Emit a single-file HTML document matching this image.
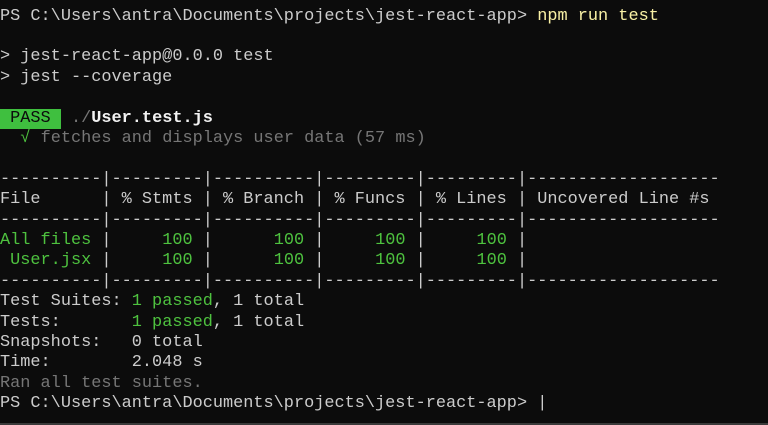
<!DOCTYPE html>
<html><head><meta charset="utf-8"><style>
html,body{margin:0;padding:0;background:#0c0c0c;width:768px;height:425px;overflow:hidden}
pre{margin:0;position:absolute;left:0;top:6.5px;font-family:"Liberation Mono",monospace;font-size:16.9px;line-height:20.4px;color:#cccccc;white-space:pre}
.g{color:#4ec23f}.y{color:#f9f1a5}.d{color:#767676}.b{color:#f2f2f2;font-weight:bold}
.p{background:#3fbf3f;color:#0c0c0c;display:inline-block;line-height:20px}
.edge{position:absolute;left:0;right:0;bottom:0;height:2px;background:#3a3a3a}
</style></head><body>
<pre>PS C:\Users\antra\Documents\projects\jest-react-app&gt; <span class="y">npm run test</span>

&gt; jest-react-app@0.0.0 test
&gt; jest --coverage

<span class="p"> PASS </span> <span class="d">./</span><span class="b">User.test.js</span>
  <span class="g">√</span> <span class="d">fetches and displays user data (57 ms)</span>

----------|---------|----------|---------|---------|-------------------
File      | % Stmts | % Branch | % Funcs | % Lines | Uncovered Line #s
----------|---------|----------|---------|---------|-------------------
<span class="g">All files</span> | <span class="g">    100</span> | <span class="g">     100</span> | <span class="g">    100</span> | <span class="g">    100</span> |
<span class="g"> User.jsx</span> | <span class="g">    100</span> | <span class="g">     100</span> | <span class="g">    100</span> | <span class="g">    100</span> |
----------|---------|----------|---------|---------|-------------------
Test Suites: <span class="g">1 passed</span>, 1 total
Tests:       <span class="g">1 passed</span>, 1 total
Snapshots:   0 total
Time:        2.048 s
<span class="d">Ran all test suites.</span>
PS C:\Users\antra\Documents\projects\jest-react-app&gt; |</pre>
<div class="edge"></div>
</body></html>
